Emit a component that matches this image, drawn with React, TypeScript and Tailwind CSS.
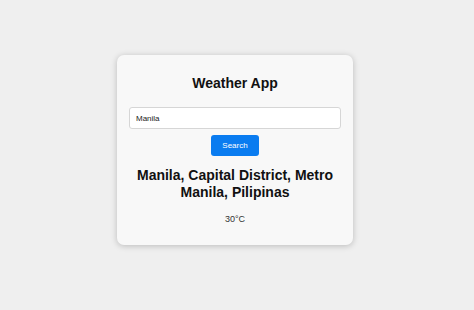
import React from "react";

export default function App() {
  return (
    <div
      className="w-[474px] h-[310px] bg-[#efefef] flex justify-center items-start pt-[55px] pr-[4px]"
      style={{ fontFamily: '"Liberation Sans", Arial, sans-serif' }}
    >
      <div className="w-[236px] bg-[#f8f8f8] rounded-[7px] shadow-[0_1px_6px_rgba(0,0,0,0.22)] px-[12px] pt-[20px] pb-[20px] flex flex-col items-center text-center">
        <h1 className="text-[14px] leading-[17px] font-bold text-[#111]">Weather App</h1>
        <input
          className="mt-[15px] w-full h-[22px] bg-white border border-[#d6d6d6] rounded-[3px] px-[6px] text-[8px] text-[#222] outline-none"
          defaultValue="Manila"
        />
        <button className="mt-[6px] w-[48px] h-[21px] bg-[#0a7cf0] rounded-[3px] text-white text-[8px]">
          Search
        </button>
        <h2 className="mt-[11px] text-[14px] leading-[17px] font-bold text-[#111] px-[4px]">
          Manila, Capital District, Metro Manila, Pilipinas
        </h2>
        <p className="mt-[12px] text-[9px] leading-[12px] text-[#333]">30°C</p>
      </div>
    </div>
  );
}
